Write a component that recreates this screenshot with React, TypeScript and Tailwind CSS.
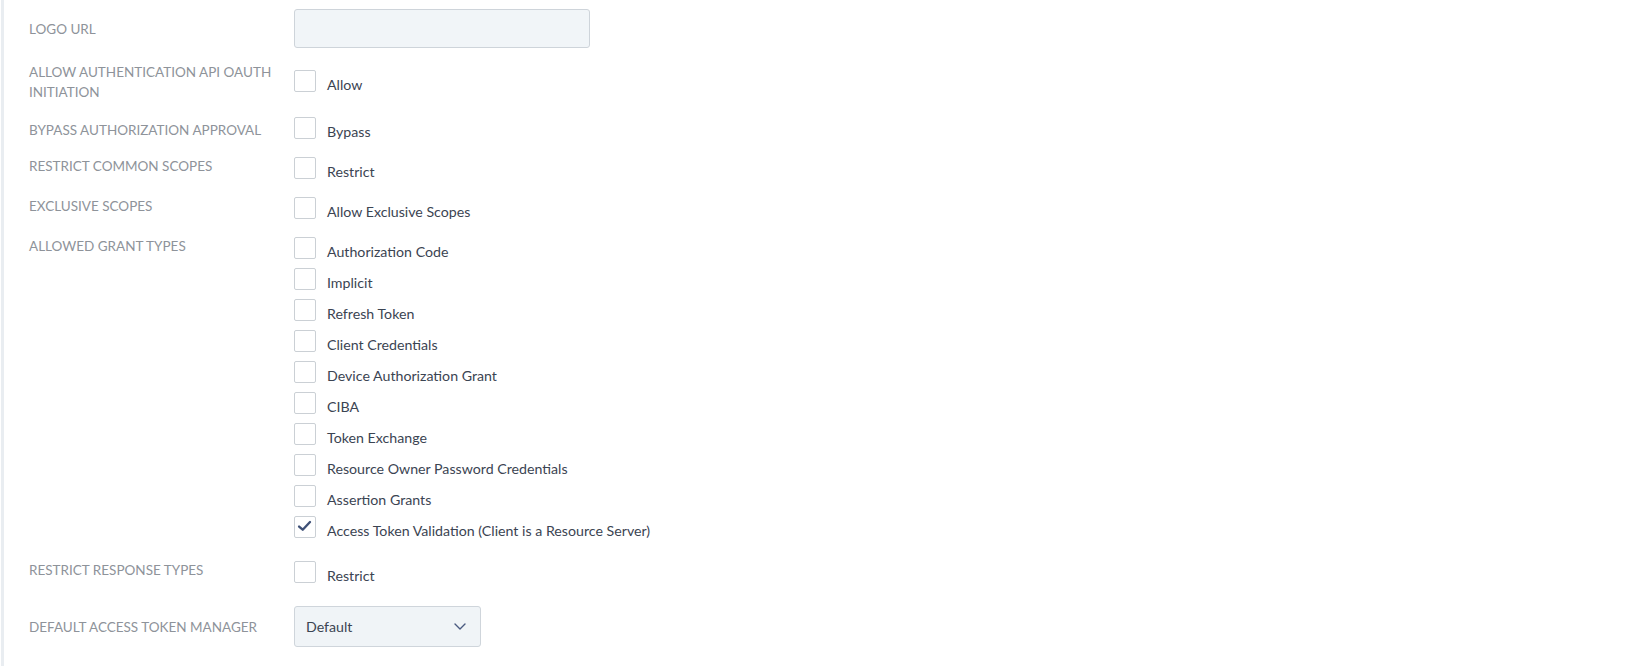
import { ReactNode } from "react";

const grantTypes = [
  { label: "Authorization Code", checked: false },
  { label: "Implicit", checked: false },
  { label: "Refresh Token", checked: false },
  { label: "Client Credentials", checked: false },
  { label: "Device Authorization Grant", checked: false },
  { label: "CIBA", checked: false },
  { label: "Token Exchange", checked: false },
  { label: "Resource Owner Password Credentials", checked: false },
  { label: "Assertion Grants", checked: false },
  { label: "Access Token Validation (Client is a Resource Server)", checked: true },
];

function Checkbox({ label, checked = false }: { label: string; checked?: boolean }) {
  return (
    <label className="flex items-start h-[25px] cursor-pointer">
      <span className="w-[22px] h-[22px] shrink-0 bg-white border border-[#cbd0d5] rounded-[2px] flex items-center justify-center">
        {checked && (
          <svg width="22" height="22" viewBox="0 0 22 22" fill="none">
            <path
              d="M4.5 10.5 L8.5 14 L16.5 5.5"
              stroke="#3f5177"
              strokeWidth="2.6"
              strokeLinecap="round"
              strokeLinejoin="round"
            />
          </svg>
        )}
      </span>
      <span className="ml-[11px] pt-[4px] text-[14.2px] leading-[21px] text-[#3b4452] whitespace-nowrap">
        {label}
      </span>
    </label>
  );
}

function Row({
  label,
  children,
  className = "",
  labelClass = "",
  center = false,
}: {
  label: string;
  children: ReactNode;
  className?: string;
  labelClass?: string;
  center?: boolean;
}) {
  return (
    <div className={`flex ${center ? "items-center" : "items-start"} ${className}`}>
      <div
        className={`w-[265px] shrink-0 pr-[14px] text-[13.5px] leading-[20px] uppercase text-[#8e939a] ${labelClass}`}
      >
        {label}
      </div>
      {children}
    </div>
  );
}

export default function App() {
  return (
    <div
      className="min-h-screen bg-white"
      style={{ fontFamily: "Lato, 'Open Sans', sans-serif" }}
    >
      <div className="ml-[1px] min-h-screen border-l-[3px] border-[#e9edf1] pl-[25px] pt-[9px] pb-[19px]">
        {/* Logo URL */}
        <Row label="Logo URL" center>
          <input
            type="text"
            className="w-[296px] h-[39px] bg-[#f1f5f8] border border-[#ced4da] rounded-[3px] px-3 text-[14px] outline-none"
          />
        </Row>

        <Row label="Allow Authentication API OAuth Initiation" className="mt-[14px]">
          <div className="mt-[8px]">
            <Checkbox label="Allow" />
          </div>
        </Row>

        <Row label="Bypass Authorization Approval" className="mt-[13px]" labelClass="mt-[5px]">
          <div className="mt-[2px]">
            <Checkbox label="Bypass" />
          </div>
        </Row>

        <Row label="Restrict Common Scopes" className="mt-[13px]" labelClass="mt-[1px]">
          <div className="mt-[2px]">
            <Checkbox label="Restrict" />
          </div>
        </Row>

        <Row label="Exclusive Scopes" className="mt-[13px]" labelClass="mt-[1px]">
          <div className="mt-[2px]">
            <Checkbox label="Allow Exclusive Scopes" />
          </div>
        </Row>

        <Row label="Allowed Grant Types" className="mt-[13px]" labelClass="mt-[1px]">
          <div className="mt-[2px] flex flex-col gap-[6px]">
            {grantTypes.map((g) => (
              <Checkbox key={g.label} label={g.label} checked={g.checked} />
            ))}
          </div>
        </Row>

        <Row label="Restrict Response Types" className="mt-[18px]" labelClass="mt-[1px]">
          <div className="mt-[2px]">
            <Checkbox label="Restrict" />
          </div>
        </Row>

        <Row label="Default Access Token Manager" className="mt-[20px]" center>
          <button className="w-[187px] h-[41px] bg-[#f0f4f7] border border-[#cfd5db] rounded-[3px] pl-[11px] pr-[14px] flex items-center justify-between text-[14.2px] text-[#3b4452]">
            <span>Default</span>
            <svg width="12" height="7" viewBox="0 0 12 7" fill="none">
              <path
                d="M1 1 L6 6 L11 1"
                stroke="#4a5a80"
                strokeWidth="1.4"
                strokeLinecap="round"
                strokeLinejoin="round"
              />
            </svg>
          </button>
        </Row>
      </div>
    </div>
  );
}
